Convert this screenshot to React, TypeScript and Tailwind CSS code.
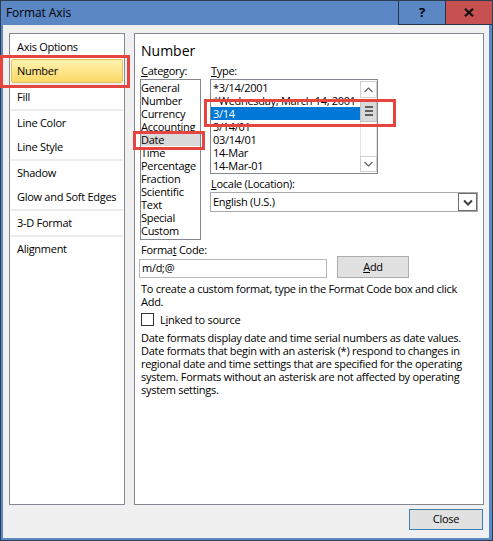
import React from "react";

function Chev({ dir, cls }: { dir: "up" | "down"; cls?: string }) {
  return (
    <svg width="9" height="6" viewBox="0 0 9 6" className={cls}>
      {dir === "up" ? (
        <path d="M0.5 5 L4.5 1 L8.5 5" fill="none" stroke="#606060" strokeWidth="1.2" />
      ) : (
        <path d="M0.5 1 L4.5 5 L8.5 1" fill="none" stroke="#606060" strokeWidth="1.2" />
      )}
    </svg>
  );
}

const leftItems: { t: string; sel?: boolean; sepAfter?: boolean }[] = [
  { t: "Axis Options" },
  { t: "Number", sel: true, sepAfter: true },
  { t: "Fill", sepAfter: true },
  { t: "Line Color" },
  { t: "Line Style", sepAfter: true },
  { t: "Shadow" },
  { t: "Glow and Soft Edges", sepAfter: true },
  { t: "3-D Format", sepAfter: true },
  { t: "Alignment" },
];

const categories = [
  "General",
  "Number",
  "Currency",
  "Accounting",
  "Date",
  "Time",
  "Percentage",
  "Fraction",
  "Scientific",
  "Text",
  "Special",
  "Custom",
];

const types = [
  "*3/14/2001",
  "*Wednesday, March 14, 2001",
  "3/14",
  "3/14/01",
  "03/14/01",
  "14-Mar",
  "14-Mar-01",
];

export default function App() {
  return (
    <div className="relative w-[493px] h-[541px] bg-[#5b87c5] border border-[#2f3d52] flex flex-col font-['Open_Sans',sans-serif] text-[11px] text-black tracking-[-0.28px]">
      {/* Title bar */}
      <div className="h-[24px] flex items-stretch">
        <div className="flex-1 flex items-center pl-[5px] text-[12px] tracking-[-0.1px]">Format Axis</div>
        <div className="w-[47px] border-l border-b border-[#26354b] flex items-center justify-center text-[13px] font-bold tracking-normal">
          ?
        </div>
        <div className="w-[47px] bg-[#c75050] border-l border-b border-[#26354b] flex items-center justify-center">
          <svg width="10" height="9" viewBox="0 0 10 9">
            <path d="M1 0.8 L9 8.2 M9 0.8 L1 8.2" stroke="#111" strokeWidth="2.2" fill="none" />
          </svg>
        </div>
      </div>

      {/* Body */}
      <div className="flex-1 ml-[2px] mr-[3px] mb-[2px] bg-[#f0f0f0] flex flex-col pl-[6px] pr-[5px] pt-[8px]">
        <div className="flex gap-[9px] h-[472px]">
          {/* Left nav */}
          <div className="w-[116px] shrink-0 border border-[#828790] bg-white pt-[1px] flex flex-col">
            {leftItems.map((it) => (
              <React.Fragment key={it.t}>
                {it.sel ? (
                  <div className="h-[24px] mx-[1px] flex items-center pl-[5px] border border-[#e2bf5e] rounded-[2px] bg-linear-to-b from-[#fff2ae] to-[#fcd864] whitespace-nowrap">
                    {it.t}
                  </div>
                ) : (
                  <div className="h-[24px] flex items-center pl-[7px] whitespace-nowrap">{it.t}</div>
                )}
                {it.sepAfter && <div className="h-[2px] mx-[1px] bg-[#ececee]" />}
              </React.Fragment>
            ))}
          </div>

          {/* Right content */}
          <div className="flex-1 border border-[#828790] bg-white pl-[5px] flex flex-col">
            <div className="mt-[7px] ml-[1px] h-[20px] leading-[20px] text-[14px] tracking-normal">Number</div>

            <div className="flex mt-[2px]">
              {/* Category column */}
              <div className="flex flex-col">
                <div className="h-[15px] leading-[15px] ml-[1px]">
                  <u>C</u>ategory:
                </div>
                <div className="mt-[1px] w-[61px] h-[161px] border border-[#828790] pt-[1px] overflow-hidden">
                  {categories.map((c) => (
                    <div
                      key={c}
                      className={
                        c === "Date"
                          ? "h-[13px] leading-[13px] bg-[#d9d9d9] whitespace-nowrap"
                          : "h-[13px] leading-[13px] whitespace-nowrap"
                      }
                    >
                      {c}
                    </div>
                  ))}
                </div>
              </div>

              {/* Type column */}
              <div className="flex flex-col ml-[9px] w-[268px]">
                <div className="h-[15px] leading-[15px] ml-[1px]">
                  <u>T</u>ype:
                </div>
                <div className="mt-[1px] w-[168px] h-[95px] border border-[#828790] flex">
                  <div className="flex-1 pt-[1px] overflow-hidden">
                    {types.map((t) => (
                      <div
                        key={t}
                        className={
                          t === "3/14"
                            ? "h-[13px] leading-[13px] pl-[2px] bg-[#0078d7] text-white whitespace-nowrap"
                            : "h-[13px] leading-[13px] pl-[2px] whitespace-nowrap"
                        }
                      >
                        {t}
                      </div>
                    ))}
                  </div>
                  <div className="w-[17px] flex flex-col pt-[1px] pb-[1px]">
                    <div className="h-[17px] border border-[#cfcfcf] flex items-center justify-center">
                      <Chev dir="up" />
                    </div>
                    <div className="h-[23px] mt-[1px] bg-[#dadada] border border-[#c2c2c2] flex flex-col items-center justify-center gap-[2px]">
                      <div className="w-[8px] h-[2px] bg-[#5f5f5f]" />
                      <div className="w-[8px] h-[2px] bg-[#5f5f5f]" />
                      <div className="w-[8px] h-[2px] bg-[#5f5f5f]" />
                    </div>
                    <div className="flex-1 border-x border-[#e3e3e3]" />
                    <div className="h-[16px] border border-[#cfcfcf] flex items-center justify-center">
                      <Chev dir="down" />
                    </div>
                  </div>
                </div>

                <div className="mt-[2px] h-[15px] leading-[15px] ml-[1px]">
                  <u>L</u>ocale (Location):
                </div>
                <div className="mt-[1px] h-[20px] border border-[#a9a9a9] flex items-center">
                  <div className="flex-1 pl-[2px] leading-[18px]">English (U.S.)</div>
                  <div className="w-[19px] h-[18px] border border-[#6b6b6b] flex items-center justify-center bg-white">
                    <svg width="10" height="7" viewBox="0 0 10 7">
                      <path d="M1 1.5 L5 5.5 L9 1.5" fill="none" stroke="#3d3d3d" strokeWidth="2" />
                    </svg>
                  </div>
                </div>
              </div>
            </div>

            <div className="mt-[3px] h-[13px] leading-[13px] ml-[1px]">
              Forma<u>t</u> Code:
            </div>
            <div className="flex items-end">
              <div className="ml-[-1px] w-[188px] h-[19px] border border-[#b9b9b9] flex items-center pl-[2px]">m/d;@</div>
              <div className="ml-[10px] w-[72px] h-[22px] border border-[#adadad] bg-[#e1e1e1] flex items-center justify-center">
                <span>
                  <u>A</u>dd
                </span>
              </div>
            </div>

            <div className="mt-[4px] ml-[1px] leading-[13px]">
              <div className="whitespace-nowrap">To create a custom format, type in the Format Code box and click</div>
              <div className="whitespace-nowrap">Add.</div>
            </div>

            <div className="mt-[5px] ml-[1px] h-[13px] flex items-center">
              <div className="w-[13px] h-[13px] border border-[#333333] bg-white" />
              <div className="ml-[6px] leading-[13px]">
                L<u>i</u>nked to source
              </div>
            </div>

            <div className="mt-[5px] ml-[1px] leading-[13px]">
              <div className="whitespace-nowrap">Date formats display date and time serial numbers as date values.</div>
              <div className="whitespace-nowrap">Date formats that begin with an asterisk (*) respond to changes in</div>
              <div className="whitespace-nowrap">regional date and time settings that are specified for the operating</div>
              <div className="whitespace-nowrap">system. Formats without an asterisk are not affected by operating</div>
              <div className="whitespace-nowrap">system settings.</div>
            </div>
          </div>
        </div>

        <div className="flex justify-end mt-[4px] pr-[1px]">
          <div className="w-[74px] h-[21px] border border-[#3c7fb1] bg-[#e1e1e1] flex items-center justify-center">
            Close
          </div>
        </div>
      </div>

      {/* Annotation highlights */}
      <div className="absolute left-[-1px] top-[54px] w-[130px] h-[33px] border-[3px] border-[#e6453f]" />
      <div className="absolute left-[132px] top-[130px] w-[72px] h-[19px] border-[3px] border-[#e6453f]" />
      <div className="absolute left-[203px] top-[98px] w-[192px] h-[28px] border-[3px] border-[#e6453f]" />
    </div>
  );
}
